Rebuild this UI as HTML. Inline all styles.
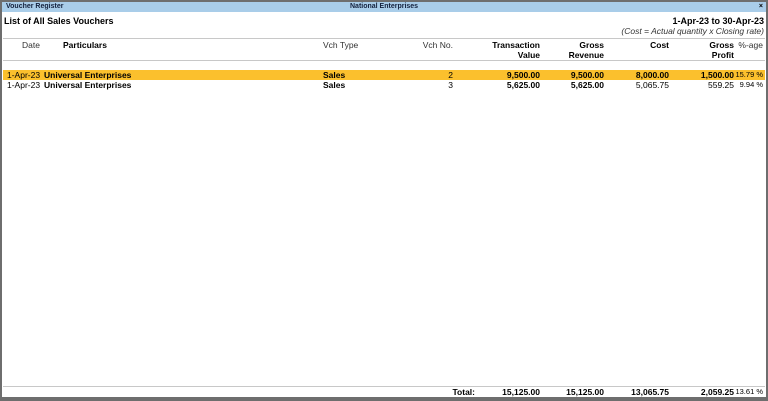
<!DOCTYPE html>
<html><head><style>
*{margin:0;padding:0;box-sizing:border-box}
body{width:768px;height:401px;background:#6e6e6e;font-family:"Liberation Sans",Arial,sans-serif;font-size:8.5px;color:#000;position:relative;overflow:hidden}
.win{position:absolute;left:2px;top:2px;width:764px;height:395px;background:#fff}
.tb{position:absolute;left:0;top:0;width:764px;height:10px;background:#a9cde9;font-size:7px;font-weight:bold;color:#14213d;line-height:10px}
.t{position:absolute;white-space:nowrap;line-height:10px}
.r{text-align:right}
.b{font-weight:bold}
.hl{position:absolute;left:1px;top:68px;width:762px;height:10px;background:#fbc02d}
.line{position:absolute;left:1px;width:762px;height:1px;background:#c8c8c8}
</style></head><body>
<div class="win">
<div class="tb"><span style="position:absolute;left:4px">Voucher Register</span><span style="position:absolute;left:348px">National Enterprises</span><span style="position:absolute;right:3px;color:#000">×</span></div>
<div class="t b" style="left:2px;top:14px;font-size:9px">List of All Sales Vouchers</div>
<div class="t b" style="right:2px;top:14px;font-size:9px">1-Apr-23 to 30-Apr-23</div>
<div class="t" style="right:2px;top:24px;font-style:italic;color:#333">(Cost = Actual quantity x Closing rate)</div>
<div class="line" style="top:36px"></div>
<div class="t" style="left:20px;top:38px;color:#333">Date</div>
<div class="t b" style="left:61px;top:38px">Particulars</div>
<div class="t" style="left:321px;top:38px;color:#333">Vch Type</div>
<div class="t r" style="right:313px;top:38px;color:#333">Vch No.</div>
<div class="t b r" style="right:226px;top:38px">Transaction<br>Value</div>
<div class="t b r" style="right:162px;top:38px">Gross<br>Revenue</div>
<div class="t b r" style="right:97px;top:38px">Cost</div>
<div class="t b r" style="right:32px;top:38px">Gross<br>Profit</div>
<div class="t r" style="right:3px;top:38px;color:#333">%-age</div>
<div class="line" style="top:58px"></div>
<div class="hl"></div>
<div class="t" style="left:5px;top:68px">1-Apr-23</div>
<div class="t b" style="left:42px;top:68px">Universal Enterprises</div>
<div class="t b" style="left:321px;top:68px">Sales</div>
<div class="t r" style="right:313px;top:68px">2</div>
<div class="t b r" style="right:226px;top:68px">9,500.00</div>
<div class="t b r" style="right:162px;top:68px">9,500.00</div>
<div class="t b r" style="right:97px;top:68px">8,000.00</div>
<div class="t b r" style="right:32px;top:68px">1,500.00</div>
<div class="t r" style="right:3px;top:68px;font-size:7.5px">15.79 %</div>
<div class="t" style="left:5px;top:78px">1-Apr-23</div>
<div class="t b" style="left:42px;top:78px">Universal Enterprises</div>
<div class="t b" style="left:321px;top:78px">Sales</div>
<div class="t r" style="right:313px;top:78px">3</div>
<div class="t b r" style="right:226px;top:78px">5,625.00</div>
<div class="t b r" style="right:162px;top:78px">5,625.00</div>
<div class="t r" style="right:97px;top:78px">5,065.75</div>
<div class="t r" style="right:32px;top:78px">559.25</div>
<div class="t r" style="right:3px;top:78px;font-size:7.5px">9.94 %</div>
<div class="line" style="top:384px"></div>
<div class="t b r" style="right:291px;top:385px">Total:</div>
<div class="t b r" style="right:226px;top:385px">15,125.00</div>
<div class="t b r" style="right:162px;top:385px">15,125.00</div>
<div class="t b r" style="right:97px;top:385px">13,065.75</div>
<div class="t b r" style="right:32px;top:385px">2,059.25</div>
<div class="t r" style="right:3px;top:385px;font-size:7.5px">13.61 %</div>
</div>
</body></html>
